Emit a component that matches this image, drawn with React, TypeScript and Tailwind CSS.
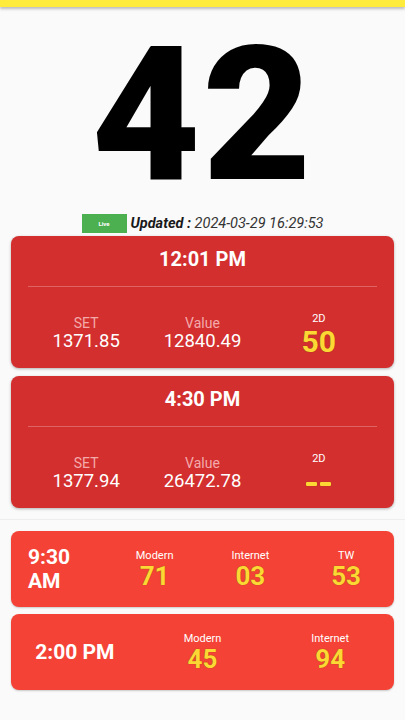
import React from "react";

const font = { fontFamily: "Roboto, 'Noto Sans', sans-serif" };

function Col({ label, value, big }: { label: string; value: string; big?: boolean }) {
  if (big) {
    return (
      <div className="flex flex-col items-center">
        <div className="text-[11px] leading-[13px] text-white">{label}</div>
        <div
          className="text-[30px] leading-[32px] font-bold text-[#fdd835] mt-[1px]"
          style={{ textShadow: "0 0 1px #7a4a00" }}
        >
          {value}
        </div>
      </div>
    );
  }
  return (
    <div className="flex flex-col items-center pt-[3px]">
      <div className="text-[14px] leading-[16px] text-[#f3aaaa]">{label}</div>
      <div className="text-[18.5px] leading-[21px] text-white">{value}</div>
    </div>
  );
}

function SetCard({ time, set, value, d2, dash }: { time: string; set: string; value: string; d2: string; dash?: boolean }) {
  return (
    <div className="bg-[#d32f2f] rounded-[8px] h-[132px] px-[17px] shadow-[0_1px_3px_rgba(0,0,0,0.3)] flex flex-col">
      <div className="h-[50px] flex items-center justify-center pb-[5px] text-white font-bold text-[20px]">{time}</div>
      <div className="h-px bg-[#e06464]" />
      <div className="grid grid-cols-3 mt-[25px]">
        <Col label="SET" value={set} />
        <Col label="Value" value={value} />
        {dash ? (
          <div className="flex flex-col items-center">
            <div className="text-[11px] leading-[13px] text-white">2D</div>
            <div className="h-[33px] flex items-center justify-center gap-[3px] pt-[5px]">
              <span className="w-[11px] h-[4px] bg-[#fdd835] rounded-[1px] shadow-[0_0_1px_#7a4a00]" />
              <span className="w-[11px] h-[4px] bg-[#fdd835] rounded-[1px] shadow-[0_0_1px_#7a4a00]" />
            </div>
          </div>
        ) : (
          <Col label="2D" value={d2} big />
        )}
      </div>
    </div>
  );
}

function Num({ label, value }: { label: string; value: string }) {
  return (
    <div className="flex flex-col items-center">
      <div className="text-[11px] leading-[13px] text-white">{label}</div>
      <div
        className="text-[26px] leading-[28px] font-bold text-[#fdd835]"
        style={{ textShadow: "0 0 1px #7a4a00" }}
      >
        {value}
      </div>
    </div>
  );
}

export default function App() {
  return (
    <div className="min-h-screen bg-[#fafafa]" style={font}>
      <div className="h-[7px] bg-[#ffeb3b] shadow-[0_2px_3px_rgba(0,0,0,0.25)]" />
      <div className="mt-[14px] h-[188px] text-center text-[188px] leading-[188px] font-black text-black tracking-[2px]">
        42
      </div>
      <div className="mt-[4px] h-[20px] flex items-center justify-center gap-[4px]">
        <div className="w-[45px] h-[19px] bg-[#4caf50] flex items-center justify-center text-white text-[6px] font-bold">
          Live
        </div>
        <div className="text-[14.5px] italic text-[#1a1a1a] leading-[19px] whitespace-nowrap">
          <span className="font-bold">Updated : </span>
          <span className="text-[#333]">2024-03-29 16:29:53</span>
        </div>
      </div>
      <div className="mt-[3px] px-[11px] flex flex-col gap-[8px]">
        <SetCard time="12:01 PM" set="1371.85" value="12840.49" d2="50" />
        <SetCard time="4:30 PM" set="1377.94" value="26472.78" d2="--" dash />
      </div>
      <div className="mt-[11px] border-t border-[#eeeeee]" />
      <div className="mt-[11px] px-[11px] flex flex-col gap-[7px]">
        <div className="bg-[#f44336] rounded-[8px] h-[76px] shadow-[0_1px_2px_rgba(0,0,0,0.2)] grid grid-cols-4 items-center">
          <div className="pl-[17px] text-white font-bold text-[21px] leading-[24px] pr-[8px]">9:30 AM</div>
          <Num label="Modern" value="71" />
          <Num label="Internet" value="03" />
          <Num label="TW" value="53" />
        </div>
        <div className="bg-[#f44336] rounded-[8px] h-[76px] shadow-[0_1px_2px_rgba(0,0,0,0.2)] grid grid-cols-3 items-center">
          <div className="text-center text-white font-bold text-[21px] leading-[24px]">2:00 PM</div>
          <Num label="Modern" value="45" />
          <Num label="Internet" value="94" />
        </div>
      </div>
    </div>
  );
}
